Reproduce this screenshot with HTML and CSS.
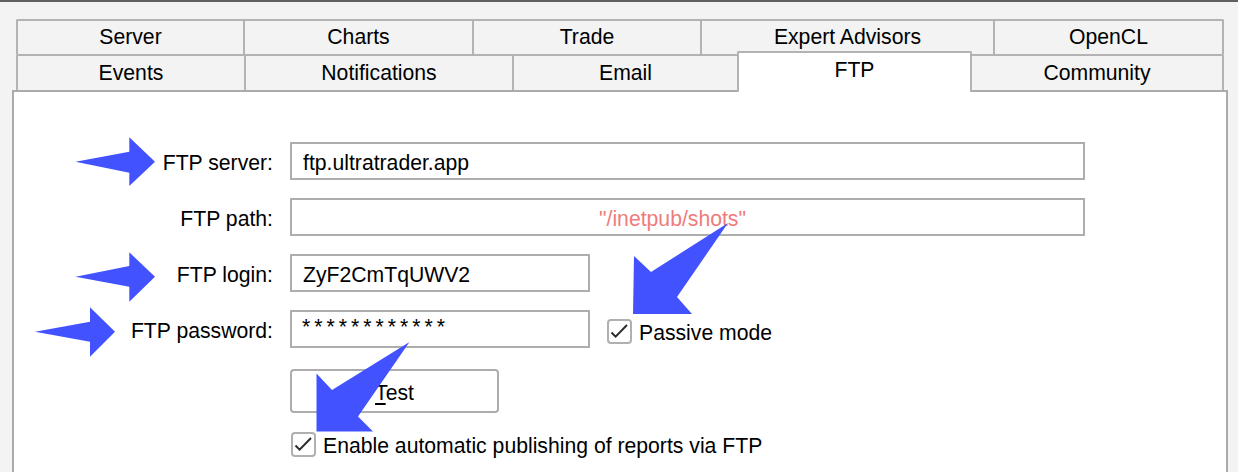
FILE: index.html
```html
<!DOCTYPE html>
<html lang="en">
<head>
<meta charset="utf-8">
<title>Options - FTP</title>
<link rel="stylesheet" href="styles.css">
</head>
<body>
<div class="window">
  <div class="tabs">
    <div class="tab-row row-top">
      <div class="tab w-server">Server</div>
      <div class="tab w-charts">Charts</div>
      <div class="tab w-trade">Trade</div>
      <div class="tab w-expert">Expert Advisors</div>
      <div class="tab w-opencl">OpenCL</div>
    </div>
    <div class="tab-row row-bottom">
      <div class="tab w-events">Events</div>
      <div class="tab w-notif">Notifications</div>
      <div class="tab w-email">Email</div>
      <div class="tab w-ftp active">FTP</div>
      <div class="tab w-community">Community</div>
    </div>
  </div>
  <div class="panel">
    <div class="form">
      <label class="label">FTP server:</label>
      <div class="cell"><input class="field wide" type="text" value="ftp.ultratrader.app"></div>

      <label class="label">FTP path:</label>
      <div class="cell"><input class="field wide path" type="text" value="&quot;/inetpub/shots&quot;"></div>

      <label class="label">FTP login:</label>
      <div class="cell"><input class="field narrow" type="text" value="ZyF2CmTqUWV2"></div>

      <label class="label">FTP password:</label>
      <div class="cell">
        <input class="field narrow pass" type="text" value="************">
        <span class="check passive">
          <span class="box"><svg viewBox="0 0 25 25" width="25" height="25"><path d="M4.5 13.5 L8.6 17.6 L20 6" fill="none" stroke="#2b2b2b" stroke-width="2"/></svg></span>
          <span class="check-text">Passive mode</span>
        </span>
      </div>

      <div class="spacer"></div>
      <div class="cell"><button class="btn" type="button"><u>T</u>est</button></div>

      <div class="spacer"></div>
      <div class="cell">
        <span class="check enable">
          <span class="box"><svg viewBox="0 0 25 25" width="25" height="25"><path d="M4.5 13.5 L8.6 17.6 L20 6" fill="none" stroke="#2b2b2b" stroke-width="2"/></svg></span>
          <span class="check-text">Enable automatic publishing of reports via FTP</span>
        </span>
      </div>
    </div>
  </div>
</div>
<svg class="arrows" viewBox="0 0 1238 472" width="1238" height="472">
  <polygon points="75.5,161.7 129.3,151.7 129.3,137.3 155,161.7 129.3,186 129.3,172.7"/>
  <polygon points="75.5,276.7 129.3,266 129.3,252.3 155,276.7 129.3,301.7 129.3,286.7"/>
  <polygon points="35,331.7 90,321.7 90,307.3 115,331.7 90,356.7 90,341.7"/>
  <polygon points="728,223 651,272 634,256 633,314 692,314 677,297"/>
  <polygon points="409.5,342 332,390 316.5,373.5 316.5,431.5 373,431.5 358,416.5"/>
</svg>
</body>
</html>
```
FILE: styles.css
```css
html, body {
  margin: 0;
  padding: 0;
}
body {
  width: 1238px;
  height: 472px;
  overflow: hidden;
  background: #f3f3f3;
  border-top: 2px solid #606060;
  box-sizing: border-box;
  font-family: "Liberation Sans", Arial, sans-serif;
  font-size: 21.2px;
  color: #000;
  position: relative;
}
.window {
  padding: 17px 0 0 12px;
}
.tabs {
  margin-left: 4px;
  width: 1208px;
}
.tab-row {
  display: flex;
}
.row-top {
  height: 35px;
}
.row-bottom {
  height: 36px;
  align-items: flex-end;
}
.tab {
  box-sizing: border-box;
  height: 100%;
  border: 2px solid #b3b3b3;
  border-bottom: none;
  border-radius: 2px 2px 0 0;
  margin-right: -2px;
  background: #f3f3f3;
  display: flex;
  align-items: center;
  justify-content: center;
  padding-bottom: 1px;
}
.row-bottom .tab {
  height: 36px;
}
.tab.active {
  position: relative;
  z-index: 2;
  height: 41px;
  margin-bottom: -2px;
  background: #fff;
  border-color: #b3b3b3;
  padding-bottom: 5px;
}
.w-server { width: 229px; }
.w-charts { width: 231px; }
.w-trade { width: 230px; }
.w-expert { width: 295px; }
.w-opencl { width: 231px; }
.w-events { width: 230px; }
.w-notif { width: 270px; }
.w-email { width: 227px; }
.w-ftp { width: 235px; }
.w-community { width: 254px; }

.panel {
  width: 1216px;
  height: 400px;
  box-sizing: border-box;
  background: #fff;
  border: 2px solid #ababab;
  border-bottom: none;
}
.form {
  display: grid;
  grid-template-columns: 259px 795px;
  column-gap: 17px;
  row-gap: 18px;
  padding-top: 50px;
}
.label {
  box-sizing: border-box;
  display: flex;
  align-items: center;
  justify-content: flex-end;
  height: 38px;
  padding-top: 4px;
}
.cell {
  display: flex;
  align-items: center;
}
.field {
  box-sizing: border-box;
  height: 38px;
  border: 2px solid #adadad;
  border-radius: 0;
  background: #fff;
  font-family: inherit;
  font-size: inherit;
  color: #000;
  padding: 3px 0 0 11px;
  margin: 0;
  outline: none;
}
.wide { width: 795px; }
.narrow { width: 300px; }
.path {
  color: #ef7c7c;
  padding-left: 307px;
  padding-top: 4px;
}
.pass {
  letter-spacing: 4px;
  padding-top: 0;
  padding-bottom: 4px;
  padding-left: 10px;
}
.check {
  display: inline-flex;
  align-items: center;
  gap: 7px;
}
.passive {
  margin-left: 17px;
  margin-top: 4px;
}
.enable {
  margin-left: 1px;
}
.box {
  box-sizing: border-box;
  width: 25px;
  height: 25px;
  border: 2px solid #b0b0b0;
  border-radius: 4px;
  background: #fff;
  display: block;
  position: relative;
}
.box svg {
  position: absolute;
  left: -2px;
  top: -2px;
}
.check-text {
  line-height: 25px;
  padding-top: 2px;
}
.spacer {
  height: 1px;
}
.btn {
  box-sizing: border-box;
  width: 209px;
  height: 44px;
  margin-top: 3px;
  border: 2px solid #adadad;
  border-radius: 4px;
  background: #fff;
  font-family: inherit;
  font-size: inherit;
  color: #000;
  padding: 4px 0 0 0;
}
.btn u {
  text-underline-offset: 3px;
}
.arrows {
  position: absolute;
  left: 0;
  top: -2px;
  pointer-events: none;
  fill: #4352ff;
}
```
